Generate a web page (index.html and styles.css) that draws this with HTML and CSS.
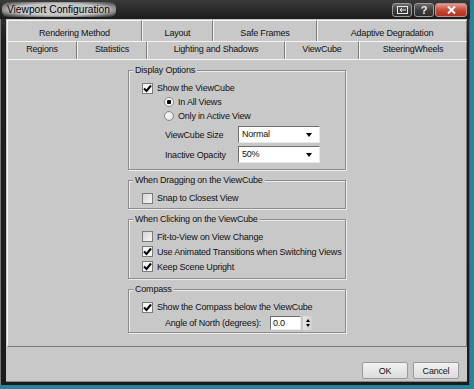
FILE: index.html
```html
<!DOCTYPE html>
<html lang="en">
<head>
    <meta charset="UTF-8">
    <title>Viewport Configuration</title>
    <link rel="stylesheet" href="styles.css">
</head>
<body>
    <div class="window">
        <div class="titlebar">
            <span class="title">Viewport Configuration</span>
            <div class="caption-buttons">
                <span class="cap-btn">
                    <svg width="11" height="8" viewBox="0 0 11 8"><rect x="0.5" y="0.5" width="10" height="7" fill="none" stroke="#e8e8e8"/><path d="M3 4h6M3 4l2-2M3 4l2 2" stroke="#e8e8e8" fill="none"/></svg>
                </span>
                <span class="cap-btn help">?</span>
                <span class="cap-btn close">
                    <svg width="9" height="8" viewBox="0 0 9 8"><path d="M1 0.5l7 7M8 0.5l-7 7" stroke="#fff" stroke-width="2"/></svg>
                </span>
            </div>
        </div>

        <div class="client">
            <div class="tabs">
                <div class="tab-row row-top">
                    <div class="tab">Rendering Method</div>
                    <div class="tab">Layout</div>
                    <div class="tab">Safe Frames</div>
                    <div class="tab">Adaptive Degradation</div>
                </div>
                <div class="tab-row row-bottom">
                    <div class="tab">Regions</div>
                    <div class="tab">Statistics</div>
                    <div class="tab">Lighting and Shadows</div>
                    <div class="tab active">ViewCube</div>
                    <div class="tab">SteeringWheels</div>
                </div>
            </div>

            <div class="panel">
                <div class="group group-display">
                    <span class="group-title">Display Options</span>
                    <div class="row">
                        <span class="check on"><svg width="9" height="9" viewBox="0 0 9 9"><path d="M1 4.5l2.5 2.5 4.5-5.5" fill="none" stroke="#000" stroke-width="2"/></svg></span>
                        Show the ViewCube
                    </div>
                    <div class="row indent">
                        <span class="radio on"></span>
                        In All Views
                    </div>
                    <div class="row indent">
                        <span class="radio"></span>
                        Only in Active View
                    </div>
                    <div class="row field-row">
                        <span class="field-label">ViewCube Size</span>
                        <span class="dropdown">Normal<span class="arrow"></span></span>
                    </div>
                    <div class="row field-row">
                        <span class="field-label">Inactive Opacity</span>
                        <span class="dropdown">50%<span class="arrow"></span></span>
                    </div>
                </div>

                <div class="group group-drag">
                    <span class="group-title">When Dragging on the ViewCube</span>
                    <div class="row">
                        <span class="check"></span>
                        Snap to Closest View
                    </div>
                </div>

                <div class="group group-click">
                    <span class="group-title">When Clicking on the ViewCube</span>
                    <div class="row">
                        <span class="check"></span>
                        Fit-to-View on View Change
                    </div>
                    <div class="row">
                        <span class="check on"><svg width="9" height="9" viewBox="0 0 9 9"><path d="M1 4.5l2.5 2.5 4.5-5.5" fill="none" stroke="#000" stroke-width="2"/></svg></span>
                        Use Animated Transitions when Switching Views
                    </div>
                    <div class="row">
                        <span class="check on"><svg width="9" height="9" viewBox="0 0 9 9"><path d="M1 4.5l2.5 2.5 4.5-5.5" fill="none" stroke="#000" stroke-width="2"/></svg></span>
                        Keep Scene Upright
                    </div>
                </div>

                <div class="group group-compass">
                    <span class="group-title">Compass</span>
                    <div class="row">
                        <span class="check on"><svg width="9" height="9" viewBox="0 0 9 9"><path d="M1 4.5l2.5 2.5 4.5-5.5" fill="none" stroke="#000" stroke-width="2"/></svg></span>
                        Show the Compass below the ViewCube
                    </div>
                    <div class="row angle-row">
                        <span class="angle-label">Angle of North (degrees):</span>
                        <span class="spin-input">0.0</span>
                        <span class="spin-arrows">
                            <span class="spin-up"></span>
                            <span class="spin-down"></span>
                        </span>
                    </div>
                </div>
            </div>

            <div class="button-bar">
                <button class="dlg-btn">OK</button>
                <button class="dlg-btn">Cancel</button>
            </div>
        </div>
    </div>
</body>
</html>
```

FILE: styles.css
```css
body {
    margin: 0;
    background-color: #23869a;
    font-family: "Liberation Sans", Arial, sans-serif;
    font-size: 9px;
    letter-spacing: -0.2px;
    color: #111;
}
.window {
    width: 470px;
    height: 385px;
    box-sizing: border-box;
    padding: 0 3px 4px 6px;
    display: flex;
    flex-direction: column;
    background: linear-gradient(#3c3c3c, #1e1e1e 40px, #1b1b1b);
    box-shadow: inset 1px 0 0 #777, inset -1px 0 0 #555;
}
.titlebar {
    height: 19px;
    display: flex;
    align-items: flex-start;
    margin-left: -6px;
    margin-right: -3px;
    padding: 0 3px 0 2px;
    background: linear-gradient(#3a3a3a, #1c1c1c);
}
.title {
    margin-top: 2px;
    padding: 0 6px 0 5px;
    height: 15px;
    font-size: 10.2px;
    letter-spacing: 0;
    line-height: 16px;
    color: #000;
    border-radius: 6px;
    background: radial-gradient(ellipse at center, #c4c4c4 55%, rgba(150, 150, 150, 0.6) 80%, rgba(90, 90, 90, 0) 100%);
    text-shadow: 0 0 3px #e0e0e0;
}
.caption-buttons {
    margin-left: auto;
    margin-top: 3px;
    display: flex;
    gap: 2px;
}
.cap-btn {
    width: 20px;
    height: 14px;
    box-sizing: border-box;
    display: flex;
    align-items: center;
    justify-content: center;
    border: 1px solid #9a9a9a;
    border-radius: 3px;
    background: linear-gradient(#6d6d6d, #3d3d3d 50%, #2c2c2c);
    color: #eee;
    font-weight: bold;
    font-size: 11px;
    letter-spacing: 0;
}
.cap-btn.close {
    width: 32px;
    margin-left: -1px;
    border-color: #b89090;
    background: linear-gradient(#e59a8c, #c84a38 50%, #b3301d);
}
.client {
    flex: 1;
    display: flex;
    flex-direction: column;
    padding: 1px 0 0 1px;
    background-color: #c8c8c8;
    box-shadow: 0 1px 0 #8a8a8a;
}
.tab-row {
    display: grid;
}
.row-top {
    grid-template-columns: 135px 71px 104px 1fr;
}
.row-bottom {
    grid-template-columns: 70px 70px 138px 74px 1fr;
}
.tab {
    box-sizing: border-box;
    text-align: center;
    border-top: 1px solid #f4f4f4;
    border-left: 1px solid #f4f4f4;
    border-right: 1px solid #7c7c7c;
    white-space: nowrap;
}
.row-top .tab {
    height: 21px;
    padding-top: 4px;
    line-height: 16px;
}
.row-bottom .tab {
    height: 18px;
    line-height: 15px;
}
.panel {
    height: 288px;
    box-sizing: border-box;
    display: flex;
    flex-direction: column;
    align-items: center;
    gap: 10px;
    padding-top: 10px;
    border-top: 1px solid #f4f4f4;
    border-left: 1px solid #f4f4f4;
    border-right: 1px solid #7c7c7c;
    border-bottom: 1px solid #7c7c7c;
}
.group {
    position: relative;
    width: 218px;
    box-sizing: border-box;
    padding: 10px 0 0 13px;
    border: 1px solid #8c8c8c;
    box-shadow: inset 1px 1px 0 #ececec, 1px 1px 0 #ececec;
}
.group-title {
    position: absolute;
    top: -7px;
    left: 4px;
    padding: 0 2px;
    line-height: 12px;
    background-color: #c8c8c8;
}
.group-display {
    height: 100px;
}
.group-drag {
    height: 29px;
}
.group-click {
    height: 60px;
    padding-top: 9px;
}
.group-click .row {
    height: 15px;
}
.group-compass {
    height: 44px;
}
.row {
    height: 14px;
    display: flex;
    align-items: center;
    white-space: nowrap;
}
.row.indent {
    padding-left: 22px;
}
.check {
    width: 11px;
    height: 11px;
    box-sizing: border-box;
    margin-right: 4px;
    display: flex;
    align-items: center;
    justify-content: center;
    border: 1px solid #7a7a7a;
    background: linear-gradient(135deg, #d4d4d4, #f6f6f6);
}
.check.on {
    background: #f4f4f4;
}
.radio {
    width: 10px;
    height: 10px;
    box-sizing: border-box;
    margin-right: 4px;
    border-radius: 50%;
    border: 1px solid #8a8a8a;
    background: radial-gradient(circle at 40% 40%, #fafafa, #d8d8d8);
}
.radio.on {
    background: radial-gradient(circle, #000 0, #000 2px, #f4f4f4 2.5px);
}
.field-row {
    height: 17px;
    margin-top: 3px;
    padding-left: 23px;
}
.field-label {
    width: 73px;
}
.dropdown {
    position: relative;
    width: 82px;
    height: 17px;
    box-sizing: border-box;
    padding-left: 3px;
    line-height: 15px;
    background-color: #fff;
    border: 1px solid #e8e8e8;
    border-top-color: #6e6e6e;
    border-left-color: #6e6e6e;
}
.arrow {
    position: absolute;
    right: 7px;
    top: 6px;
    border-left: 3.5px solid transparent;
    border-right: 3.5px solid transparent;
    border-top: 4px solid #000;
}
.angle-row {
    height: 15px;
    margin-top: 1px;
    padding-left: 23px;
}
.angle-label {
    width: 105px;
}
.spin-input {
    width: 31px;
    height: 14px;
    box-sizing: border-box;
    padding-left: 2px;
    line-height: 12px;
    background-color: #fff;
    border: 1px solid #e8e8e8;
    border-top-color: #6e6e6e;
    border-left-color: #6e6e6e;
}
.spin-arrows {
    width: 9px;
    height: 14px;
    margin-left: 2px;
    display: flex;
    flex-direction: column;
    align-items: center;
    justify-content: center;
    gap: 2px;
    background: linear-gradient(90deg, #e6e6e6, #cfcfcf);
}
.spin-up {
    border-left: 2.5px solid transparent;
    border-right: 2.5px solid transparent;
    border-bottom: 3px solid #000;
}
.spin-down {
    border-left: 2.5px solid transparent;
    border-right: 2.5px solid transparent;
    border-top: 3px solid #000;
}
.button-bar {
    display: flex;
    justify-content: flex-end;
    gap: 5px;
    margin-top: 15px;
    padding-right: 8px;
}
.dlg-btn {
    width: 46px;
    height: 17px;
    padding: 0;
    font-family: inherit;
    font-size: 9px;
    letter-spacing: -0.2px;
    color: #111;
    border: 1px solid #9a9a9a;
    border-radius: 2px;
    background: linear-gradient(#f2f2f2, #dcdcdc);
}
```
